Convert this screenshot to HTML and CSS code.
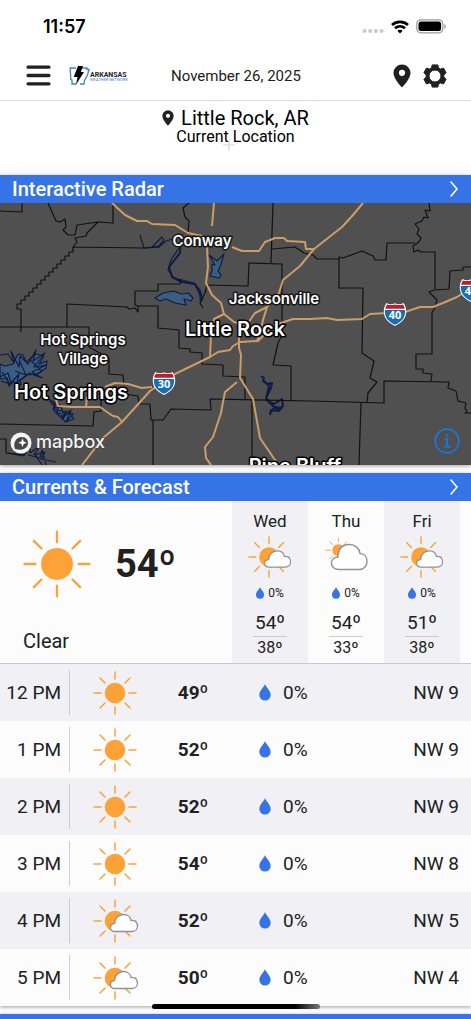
FILE: index.html
```
<!DOCTYPE html>
<html lang="en">
<head>
<meta charset="utf-8">
<meta name="viewport" content="width=device-width, initial-scale=1">
<title>Arkansas Weather Network</title>
<link rel="stylesheet" href="styles.css">
</head>
<body>
<svg class="sprite" aria-hidden="true">
  <symbol id="rays" viewBox="0 0 44 44">
    <g fill="none" stroke="#f9a33d" stroke-width="1.5" stroke-linecap="round"><path d="M22 1v7M22 36v7M1 22h7M36 22h7M7 7l5 5M32 32l5 5M37 7l-5 5M12 32l-5 5"/></g>
  </symbol>
  <symbol id="sun" viewBox="0 0 44 44">
    <use href="#rays"/><circle cx="22" cy="22" r="10.3" fill="#fca237"/>
  </symbol>
  <symbol id="partly" viewBox="0 0 46 44">
    <use href="#rays" width="44" height="44"/><circle cx="22" cy="22" r="10.3" fill="#fca237"/>
    <path d="M22 32.500c-6 0-6-7.500-.5-7.800C22 18 27 15.500 30.500 15.500c4 0 7 2.500 7.500 6 4.500-.5 6.500 2.500 6.500 5.500 0 3-2 5.500-5.500 5.500z" fill="#fff" stroke="#8f9194" stroke-width="1.300"/>
  </symbol>
  <symbol id="cloudy" viewBox="0 0 46 44">
    <g fill="none" stroke="#f9a33d" stroke-width="1" stroke-linecap="round"><path d="M15 2v4M2 15h5M6 6l3 3M24 6l-3 3M9 21l-3 3"/></g>
    <circle cx="15" cy="15" r="6.300" fill="#fca237"/>
    <path d="M15 35c-9-.5-10-12-.5-13C15 13 20 9 26.500 9c6 0 10.500 4 11.200 9.500C42.500 18.500 45 22 45 26.500 45 31 42 35 37 35z" fill="#fff" stroke="#919396" stroke-width="1.500"/>
  </symbol>
  <symbol id="drop" viewBox="0 0 12 18"><path d="M6 0c1 3.500 6 7 6 11.600a6 6 0 0 1-12 0C0 7 5 3.500 6 0z" fill="#3673e6"/></symbol>
  <symbol id="pin" viewBox="0 0 18 24"><path fill-rule="evenodd" d="M9 .5A8.500 8.500 0 0 0 .5 9C.5 15 9 23.500 9 23.500S17.500 15 17.500 9A8.500 8.500 0 0 0 9 .5zm0 5.200a3.100 3.100 0 1 1 0 6.200 3.100 3.100 0 0 1 0-6.200z" fill="#212121"/></symbol>
  <symbol id="chevron" viewBox="0 0 10 18"><path d="M2 2l6 7-6 7" fill="none" stroke="#fff" stroke-width="1.600" stroke-linecap="round"/></symbol>
  <symbol id="shield" viewBox="0 0 24 24">
    <path d="M3.500.5C6 2 9.500 2 12 .800 14.500 2 18 2 20.500.5 22.500 3 23.500 6.500 23.200 10c-.4 6.500-5 10.500-11.200 13.500C5.800 20.500 1.200 16.500.8 10 .5 6.500 1.500 3 3.500.5z" fill="#fff"/>
    <path d="M4 1.900c2.500 1 5.500.9 8 0 2.500.9 5.500 1 8 0 .9 1.200 1.500 2.600 1.800 4.400H2.200C2.500 4.500 3.100 3.100 4 1.900z" fill="#bd1d2c"/>
    <path d="M1.900 7.400h20.200c.7 7.500-3.700 11.900-10.100 14.900C5.600 19.300 1.200 14.900 1.900 7.400z" fill="#176faf"/>
  </symbol>
</svg>

<div class="app">
  <div class="status">
    <time class="clock">11:57</time>
    <div class="signals">
      <svg class="cell" viewBox="0 0 22 4"><g fill="#c9c9c9"><circle cx="2.500" cy="2" r="2"/><circle cx="8.200" cy="2" r="2"/><circle cx="13.900" cy="2" r="2"/><circle cx="19.600" cy="2" r="2"/></g></svg>
      <svg class="wifi" viewBox="0 0 18 14"><g fill="none" stroke="#000" stroke-width="2.700"><path d="M1 4.900C5.500.8 12.500.8 17 4.900M4 8.200c3-2.600 7-2.600 10 0"/></g><path d="M9 13.500l-2.700-2.700c1.600-1.300 3.800-1.300 5.400 0z"/></svg>
      <svg class="battery" viewBox="0 0 30 15"><rect x=".8" y=".8" width="26" height="13" rx="4" fill="none" stroke="#999" stroke-width="1.200"/><rect x="2.500" y="2.500" width="22.600" height="9.600" rx="2.500"/><path d="M28.300 5c2 1 2 4 0 5z" fill="#999"/></svg>
    </div>
  </div>

  <header class="topbar">
    <button class="icon-btn" aria-label="Menu"><svg class="menu-icon" viewBox="0 0 24 20"><path d="M2 2h20M2 10h20M2 18h20" stroke="#212121" stroke-width="3.200" stroke-linecap="round"/></svg></button>
    <svg class="logo" viewBox="0 0 60 22" role="img" aria-label="Arkansas Weather Network">
      <path d="M7 3H1.200l.6 11.500L3 15v4h4M11 19h4l.5-3.500 3-5.500L20 4.500h-2V3h-6" fill="none" stroke="#3d82c4" stroke-width="1.300"/>
      <path d="M9 1h5l-2.200 6H15L6.800 20l1.800-8H4.700z"/>
      <text class="logo-name" x="21" y="12">ARKANSAS</text>
      <text class="logo-sub" x="21" y="16">WEATHER NETWORK</text>
    </svg>
    <time class="date">November 26, 2025</time>
    <button class="icon-btn" aria-label="Locations"><svg class="pin-icon"><use href="#pin"/></svg></button>
    <button class="icon-btn" aria-label="Settings"><svg class="gear-icon" viewBox="0 0 24 24"><path fill="#212121" fill-rule="evenodd" stroke="#212121" stroke-linejoin="round" d="M9.200.9h5.600l.7 3 2 1.200 3-1 2.600 4.700-2.300 2.100v2.200l2.300 2.100-2.600 4.700-3-1-2 1.200-.7 3H9.200l-.7-3-2-1.200-3 1-2.600-4.700L3.200 13.100v-2.200L.9 8.800l2.600-4.700 3 1 2-1.200zM12 6a6 6 0 1 0 0 12 6 6 0 0 0 0-12z"/></svg></button>
  </header>

  <section class="place">
    <h1 class="place-name"><svg class="place-pin"><use href="#pin"/></svg>Little Rock, AR</h1>
    <p class="place-sub">Current Location</p>
    <svg class="plus" viewBox="0 0 12 12" aria-hidden="true"><path d="M6 0v12M0 6h12" stroke="#d5d5d5" stroke-width="1.200"/></svg>
  </section>

  <section class="card">
    <a class="bar" href="#radar"><span>Interactive Radar</span><svg class="chevron"><use href="#chevron"/></svg></a>
    <div class="map" id="radar">
      <svg class="map-art" viewBox="0 203 471 262" preserveAspectRatio="xMidYMid slice" role="img" aria-label="Radar map of central Arkansas">
        <g class="water">
          <path d="M140 235l4 13 16-2 6-5 10-3 5-2M152 247l10-10 2 3-6 7"/>
          <path class="navy" d="M181 238l-1 15-11 14 3 10 10 5 13 2 5 10 1 8"/>
          <path d="M179 248l-8 12-3 10 6 8 20 5 6 7 3 10"/>
          <path class="lake" d="M209 255l8 6 7-7-4 13-2 4 3 4-2 3-9-2 2-5v-7l3 1zM155 298l8-5 11-2 7 3 7-1 5 5-2 3-7-2 2 6-11-2-9-4-6 2z"/>
          <path class="lake" d="M0 364l5 2 8-2 5-10 5 1 3 7 10-8 8 2-5 8 8-3-1 7-9 6-10 1-7 5 1 5-8-3-4 4-2-8-7 1z"/>
          <path d="M0 355l8-1 6 9-3-12 8 16 1-11 8 8 8-14-3 11 12-8-11 14 12-2-14 7 10 6-13-5-12 10 2-9-8 9-3-10-8 4M2 372l8 12-9-3M15 371l11 4-6-13M30 360l12 11-8 5"/>
          <path class="lake" d="M50 401l5 4-1 6 7 3 4 8 9-3-4-5-7-1-2-6-5 1z"/>
          <path d="M46 398l10 5-3 6 12 3-3 7 9-9-5 12 7-8-7-3-3 8-7-6 4-9M8 453l14 3 4-3 3-11 1 11 10-7-6 9 11-3-4 7 15 3M34 453l8 12M28 455l12 3 2-8 4 15"/>
          <path class="navy" d="M261 376l3 2-1 3 4 3 5-1-1 5-5 10 4 4 4 2 8-5 1 6-4 6-8-1-1 5M264 381l5 5-3 13 7 7 7 5M270 413l5-6 7 1 1-4"/>
        </g>
        <path class="borders" d="M0 211l22 1v-9M48 203l4 9 4 9 4 1 5-3 1 8-3 3 5 5h7l2-10 21-3 15 1v-20M98 222l-11 11-1 3-11 2 2 4-4 5 72 1 15-1
          M73 247v5h-4v4h-4v4h-4v4h-4v4h-4v4h-4v4h-4v4h-4v4h-4v4h-4v4h-4v4h-4v4h-4v4h-4v5h4v23M0 327h89v20l20 11v16l14 1 1 10M125 394l13 2 1 8h11l1 16h12l8-11 40 1-1-11 100 2 74 2v-22l65 1-1 6 8 3 2 10 8 2-1 5 2 4-2 1h6
          M67 327v-23l60 3 2 2 6-1 3 4v-6h20v22l21 2v18l11 1v3l12 1v11l21 1v11l22 1v22M138 306l-3-1v-14h23v-7h22l1-5
          M189 203l-6 5 2 9 4 4-1 12M273 203l-2 60M272 249l23-2 9 6 9 2 4 4h23M203 308l-3-5 5-10 2-8 41 1 1-23 33 1v71l-4 8-5 22 18 1v34
          M252 400v65M153 420v45M361 403l-2 62M0 424l93 2 1-14 7-1v-11M0 439h6v14l19 2
          M367 402l1-9 9-11-7-4 4-17-12-8 1-65h-24v-31l4 1 19-7 11 5 2 4h11l1-17h28
          M429 203l1 8-5-1 3 8-4-1-2 4-7 3 4 5-2 5 4 4-2 4-6 4 1 6 4-2 3 2h14v38l14-1 1-18 13-1v-3h9M434 290l-5 2 8 8-2 7-3 6v41h-16v15h7v4l9 1-1 7"/>
        <g class="roads">
          <path d="M112 203l13 12 12 6h10l5 3 23 1 13 8 14 3 5 11 1 20-2 16 6 12 9 8 3 11 10 8 11 3M224 314l-10 5-3 16-1 22M214 203l-2 23M232 247l10 4h17l6-9 10-4h9l3 3 18 1 1 7h8l28-22 11-12 10-12M314 249l-14 17-17 14-4 13-12 14-12 6-7 10-9 13v12l2 7-1 23 13 21 7 39 15 22 3 5M267 307l-4 13-3 14-3 7"/>
          <path d="M82 465l21-27 19-16 28-31 25-17 35-17 8-5 12-2 3-4 7-4 18-1 5-5 12-11 18-6h17l17-1 10 2 25-1 8-5 35-2 15-5h13l10-4 14-6 14-9M105 387l10-4 13 1 14 4 10-1M56 400l2 6 14 1h28l7 5 6 4 5 1 4 5M87 397l-1 10M237 382l-12 10-2 10-2 11-8 24-8 10 1 11 5 7"/>
        </g>
        <g class="shields">
          <use href="#shield" x="152" y="371" width="24" height="25"/><use href="#shield" x="383" y="302" width="24" height="25"/><use href="#shield" x="459" y="278" width="24" height="25"/>
          <text x="164" y="388">30</text><text x="395" y="319">40</text><text x="471" y="295">40</text>
        </g>
        <g class="labels">
          <text class="town" x="202" y="246">Conway</text>
          <text class="town" x="274" y="304">Jacksonville</text>
          <text class="town" x="83" y="345">Hot Springs</text>
          <text class="town" x="83" y="364">Village</text>
          <text class="city" x="235" y="336">Little Rock</text>
          <text class="city" x="71" y="399">Hot Springs</text>
          <text class="city" x="295" y="473">Pine Bluff</text>
        </g>
        <circle cx="21" cy="443" r="10.500" fill="#f4f4f4"/>
        <path d="M15 449c-2-5 0-12 7-12 4 0 6 3 6 6 0 6-7 8-13 6z" fill="#484848"/><path d="M22.500 438.500l1.200 3 3 1.200-3 1.200-1.200 3-1.200-3-3-1.200 3-1.200z" fill="#fff"/>
        <text class="credit" x="36" y="448">mapbox</text>
      </svg>
      <button class="info" aria-label="Map information"><svg viewBox="0 0 26 26"><g fill="none" stroke="#1877e0" stroke-width="1.700"><circle cx="13" cy="13" r="11.800"/><path d="M10.200 11h3v7.500M9.800 18.700h6.600"/></g><circle cx="13" cy="7.500" r="1.300" fill="#1877e0"/></svg></button>
    </div>
  </section>

  <section class="card">
    <a class="bar" href="#forecast"><span>Currents &amp; Forecast</span><svg class="chevron"><use href="#chevron"/></svg></a>
    <div class="summary" id="forecast">
      <div class="current">
        <div class="now"><svg class="sun-large"><use href="#sun"/></svg><strong class="temp-now">54º</strong></div>
        <p class="condition">Clear</p>
      </div>
      <div class="days">
        <article class="day tinted"><h2 class="day-name">Wed</h2><svg class="day-icon"><use href="#partly"/></svg><p class="rain"><svg class="drop-small"><use href="#drop"/></svg>0%</p><p class="high">54º</p><p class="low">38º</p></article>
        <article class="day"><h2 class="day-name">Thu</h2><svg class="day-icon"><use href="#cloudy"/></svg><p class="rain"><svg class="drop-small"><use href="#drop"/></svg>0%</p><p class="high">54º</p><p class="low">33º</p></article>
        <article class="day tinted"><h2 class="day-name">Fri</h2><svg class="day-icon"><use href="#partly"/></svg><p class="rain"><svg class="drop-small"><use href="#drop"/></svg>0%</p><p class="high">51º</p><p class="low">38º</p></article>
      </div>
    </div>
    <table class="hours" aria-label="Hourly forecast">
      <tbody>
        <tr><th scope="row"><span class="hour">12 PM</span></th><td class="sky"><svg class="hour-icon"><use href="#sun"/></svg></td><td class="temp">49º</td><td class="precip"><span class="chance"><svg class="drop"><use href="#drop"/></svg>0%</span></td><td class="wind">NW 9</td></tr>
        <tr><th scope="row"><span class="hour">1 PM</span></th><td class="sky"><svg class="hour-icon"><use href="#sun"/></svg></td><td class="temp">52º</td><td class="precip"><span class="chance"><svg class="drop"><use href="#drop"/></svg>0%</span></td><td class="wind">NW 9</td></tr>
        <tr><th scope="row"><span class="hour">2 PM</span></th><td class="sky"><svg class="hour-icon"><use href="#sun"/></svg></td><td class="temp">52º</td><td class="precip"><span class="chance"><svg class="drop"><use href="#drop"/></svg>0%</span></td><td class="wind">NW 9</td></tr>
        <tr><th scope="row"><span class="hour">3 PM</span></th><td class="sky"><svg class="hour-icon"><use href="#sun"/></svg></td><td class="temp">54º</td><td class="precip"><span class="chance"><svg class="drop"><use href="#drop"/></svg>0%</span></td><td class="wind">NW 8</td></tr>
        <tr><th scope="row"><span class="hour">4 PM</span></th><td class="sky"><svg class="hour-icon part"><use href="#partly"/></svg></td><td class="temp">52º</td><td class="precip"><span class="chance"><svg class="drop"><use href="#drop"/></svg>0%</span></td><td class="wind">NW 5</td></tr>
        <tr><th scope="row"><span class="hour">5 PM</span></th><td class="sky"><svg class="hour-icon part"><use href="#partly"/></svg></td><td class="temp">50º</td><td class="precip"><span class="chance"><svg class="drop"><use href="#drop"/></svg>0%</span></td><td class="wind">NW 4</td></tr>
      </tbody>
    </table>
  </section>

  <section class="card"><div class="bar"></div></section>
  <div class="home-indicator"></div>
</div>
</body>
</html>
```
FILE: styles.css
```
* { box-sizing: border-box; }
body, h1, h2, p { margin: 0; font-weight: 400; }
body { background: #fff; color: #212121; font-family: Roboto, "Liberation Sans", sans-serif; }
svg { display: block; flex: none; }
button { padding: 0; border: 0; background: none; cursor: pointer; }
.sprite { position: absolute; width: 0; height: 0; }

.app { position: relative; height: 100vh; overflow: hidden; }

.status { display: flex; justify-content: space-between; align-items: center; height: 51px; padding: 2px 25px 0 43px; }
.clock { font: 600 18px/22px Inter, sans-serif; color: #000; }
.signals { display: flex; align-items: center; gap: 7px; }
.cell { width: 22px; height: 4px; margin-top: 8px; }
.wifi { width: 18px; height: 14px; }
.battery { width: 30px; height: 15px; }

.topbar { display: flex; align-items: center; height: 50px; padding: 0 24px 0 26px; border-bottom: 1px solid #ddd; }
.icon-btn { display: flex; align-items: center; justify-content: center; }
.menu-icon { width: 25px; height: 21px; }
.logo { width: 60px; height: 22px; margin-left: 18px; }
.logo-name { font: 700 7px Roboto, sans-serif; fill: #222; }
.logo-sub { font: 400 4px Roboto, sans-serif; fill: #3d82c4; }
.date { flex: 1; padding-left: 42px; font-size: 15px; line-height: 20px; }
.pin-icon { width: 18px; height: 24px; }
.gear-icon { width: 24px; height: 24px; margin-left: 12px; }

.place { position: relative; height: 74px; padding-top: 7px; text-align: center; color: #000; }
.place-name { display: flex; align-items: center; justify-content: center; gap: 7px; font-size: 20px; line-height: 20px; }
.place-pin { width: 12px; height: 16px; }
.place-sub { font-size: 16px; line-height: 18px; }
.plus { position: absolute; top: 38px; left: 50%; width: 12px; height: 12px; margin-left: -13px; }

.card { margin-bottom: 8px; background: #fcfcfc; box-shadow: 0 1px 4px rgba(0, 0, 0, .4); }
.bar { display: flex; align-items: center; justify-content: space-between; height: 28px; padding: 0 12px; background: #3673e6; color: #fff; font-size: 20px; font-weight: 500; line-height: 28px; text-decoration: none; }
.chevron { width: 10px; height: 18px; }

.map { position: relative; background: #505050; }
.map-art { width: 100%; height: 262px; }
.map-art path { stroke-linejoin: round; }
.borders { fill: none; stroke: #111; stroke-width: 1.2; }
.roads { fill: none; stroke: #cd9c68; stroke-width: 2; }
.water { fill: none; stroke: #0d1c45; stroke-width: 1.2; }
.lake { fill: #3d5d80; }
.navy { stroke-width: 2; }
.shields { fill: #fff; font: 700 11px "Open Sans", sans-serif; text-anchor: middle; }
.labels { fill: #fff; stroke: #171717; stroke-width: 3px; stroke-linejoin: round; paint-order: stroke; text-anchor: middle; font-family: Inter, sans-serif; font-weight: 600; }
.town { font-size: 15px; }
.city { font-size: 20px; stroke: #000; }
.credit { font: 500 18px Inter, sans-serif; fill: #f4f4f4; stroke: #3a3a3a; stroke-width: 1px; paint-order: stroke; }
.info { position: absolute; right: 11px; bottom: 11px; width: 26px; height: 26px; }

.summary { display: flex; border-bottom: 1px solid #c8c8ca; }
.current { flex: 1; display: flex; flex-direction: column; padding: 29px 0 10px 23px; }
.now { flex: 1; display: flex; align-items: flex-start; gap: 24px; }
.sun-large { width: 68px; height: 68px; }
.temp-now { font-size: 38px; line-height: 68px; font-weight: 700; }
.condition { font-size: 20px; line-height: 24px; }
.days { display: grid; grid-template-columns: repeat(3, 76px); padding-right: 11px; }
.day { display: flex; flex-direction: column; align-items: center; padding: 9px 0 4px; }
.tinted { background: #f0f0f5; }
.day-name { font-size: 17px; line-height: 22px; }
.day-icon { width: 44px; height: 44px; margin-top: 3px; }
.rain { display: flex; align-items: center; gap: 4px; padding: 6px 0 8px; font-size: 12px; line-height: 16px; }
.drop-small { width: 8px; height: 12px; }
.high { width: 34px; font-size: 19px; line-height: 27px; text-align: center; border-bottom: 1px solid #ccc; }
.low { font-size: 16px; line-height: 22px; }

.hours { width: 100%; border-collapse: collapse; table-layout: fixed; font-size: 19px; }
.hours tr { height: 57px; }
.hours tr:nth-child(odd) { background: #f0f0f5; }
.hours th, .hours td { padding: 0; font-weight: 400; }
.hours th { width: 70px; }
.hour { display: block; padding-right: 8px; border-right: 1px solid #ccc; line-height: 45px; text-align: right; }
.hours .sky { width: 92px; }
.hour-icon { width: 44px; height: 44px; margin-left: 23px; }
.part { width: 46px; }
.hours .temp { width: 62px; text-align: center; font-weight: 700; }
.chance { display: flex; align-items: center; gap: 12px; padding-left: 35px; }
.drop { width: 12px; height: 17px; }
.hours .wind { padding-right: 12px; text-align: right; }

.home-indicator { position: absolute; bottom: 10px; left: 50%; width: 168px; height: 5px; border-radius: 3px; background: linear-gradient(90deg, #000 85%, #777); transform: translateX(-50%); }
```
